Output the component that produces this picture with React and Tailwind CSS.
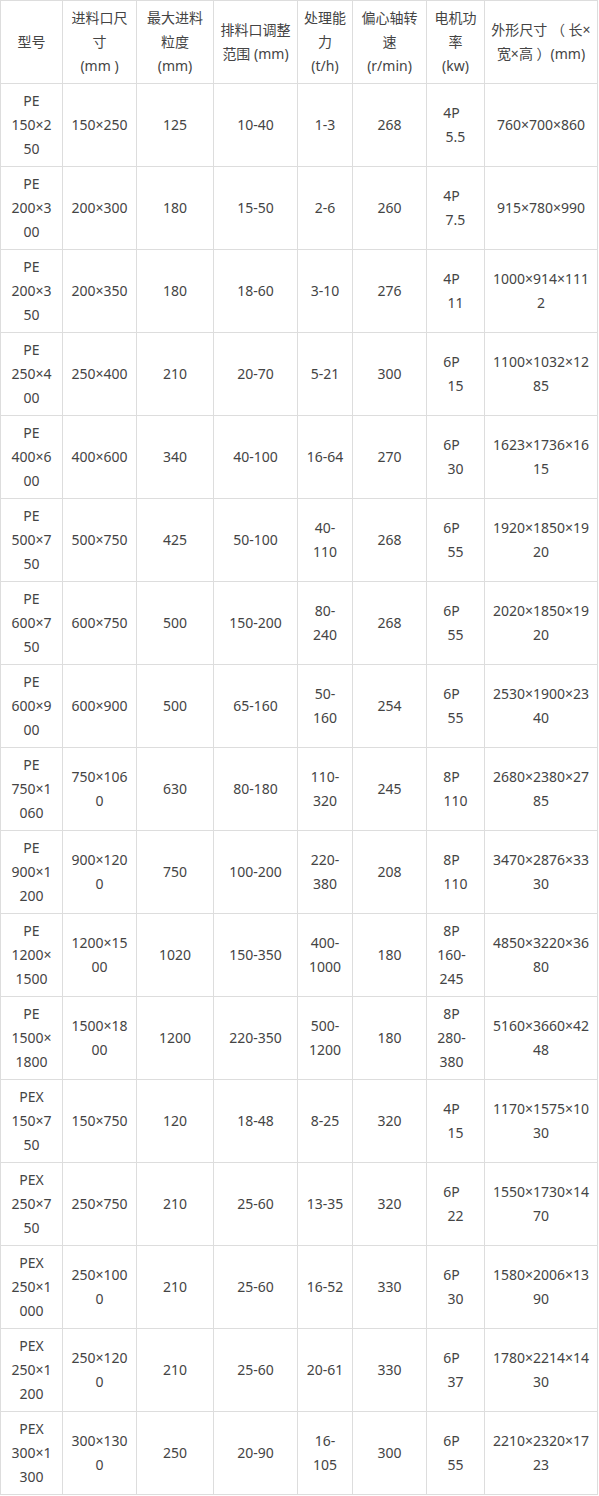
const header = [
  '型号',
  '进料口尺|寸|(mm )',
  '最大进料|粒度|(mm)',
  '排料口调整|范围 (mm)',
  '处理能|力|(t/h)',
  '偏心轴转|速|(r/min)',
  '电机功|率|(kw)',
  '外形尺寸 （ 长×|宽×高 ）(mm)',
]

// each cell is split on "|" into the lines shown in the picture
const rows = [
  ['PE|150×2|50', '150×250', '125', '10-40', '1-3', '268', '4P|5.5', '760×700×860'],
  ['PE|200×3|00', '200×300', '180', '15-50', '2-6', '260', '4P|7.5', '915×780×990'],
  ['PE|200×3|50', '200×350', '180', '18-60', '3-10', '276', '4P|11', '1000×914×111|2'],
  ['PE|250×4|00', '250×400', '210', '20-70', '5-21', '300', '6P|15', '1100×1032×12|85'],
  ['PE|400×6|00', '400×600', '340', '40-100', '16-64', '270', '6P|30', '1623×1736×16|15'],
  ['PE|500×7|50', '500×750', '425', '50-100', '40-|110', '268', '6P|55', '1920×1850×19|20'],
  ['PE|600×7|50', '600×750', '500', '150-200', '80-|240', '268', '6P|55', '2020×1850×19|20'],
  ['PE|600×9|00', '600×900', '500', '65-160', '50-|160', '254', '6P|55', '2530×1900×23|40'],
  ['PE|750×1|060', '750×106|0', '630', '80-180', '110-|320', '245', '8P|110', '2680×2380×27|85'],
  ['PE|900×1|200', '900×120|0', '750', '100-200', '220-|380', '208', '8P|110', '3470×2876×33|30'],
  ['PE|1200×|1500', '1200×15|00', '1020', '150-350', '400-|1000', '180', '8P|160-|245', '4850×3220×36|80'],
  ['PE|1500×|1800', '1500×18|00', '1200', '220-350', '500-|1200', '180', '8P|280-|380', '5160×3660×42|48'],
  ['PEX|150×7|50', '150×750', '120', '18-48', '8-25', '320', '4P|15', '1170×1575×10|30'],
  ['PEX|250×7|50', '250×750', '210', '25-60', '13-35', '320', '6P|22', '1550×1730×14|70'],
  ['PEX|250×1|000', '250×100|0', '210', '25-60', '16-52', '330', '6P|30', '1580×2006×13|90'],
  ['PEX|250×1|200', '250×120|0', '210', '25-60', '20-61', '330', '6P|37', '1780×2214×14|30'],
  ['PEX|300×1|300', '300×130|0', '250', '20-90', '16-|105', '300', '6P|55', '2210×2320×17|23'],
]

const widths = ['w-[62px]', 'w-[74px]', 'w-[77px]', 'w-[84px]', 'w-[55px]', 'w-[74px]', 'w-[58px]', 'w-[113px]']

function Lines({ text, power }) {
  const parts = text.split('|')
  return parts.map((line, i) => {
    // the power column has its motor poles line pushed a bit left
    const shift = power && (i < parts.length - 1 || parts.length > 2)
    return (
      <span key={i} className={'block whitespace-nowrap' + (shift ? ' pr-2' : '')}>
        {line}
      </span>
    )
  })
}

export default function App() {
  return (
    <div
      className="bg-white text-[#444] text-[14px] leading-[24px]"
      style={{ fontFamily: '"Noto Sans", "Noto Sans CJK SC", sans-serif' }}
    >
      <table className="table-fixed border-collapse w-[598px]">
        <colgroup>
          {widths.map((w, i) => (
            <col key={i} className={w} />
          ))}
        </colgroup>
        <thead>
          <tr className="h-[83px]">
            {header.map((h, i) => (
              <th key={i} className="border border-[#dddddd] px-[6px] py-0 text-center align-middle font-normal">
                <Lines text={h} />
              </th>
            ))}
          </tr>
        </thead>
        <tbody>
          {rows.map((row, r) => (
            <tr key={r} className="h-[83px]">
              {row.map((cell, c) => (
                <td key={c} className="border border-[#dddddd] px-[6px] py-0 text-center align-middle">
                  <Lines text={cell} power={c === 6} />
                </td>
              ))}
            </tr>
          ))}
        </tbody>
      </table>
    </div>
  )
}
